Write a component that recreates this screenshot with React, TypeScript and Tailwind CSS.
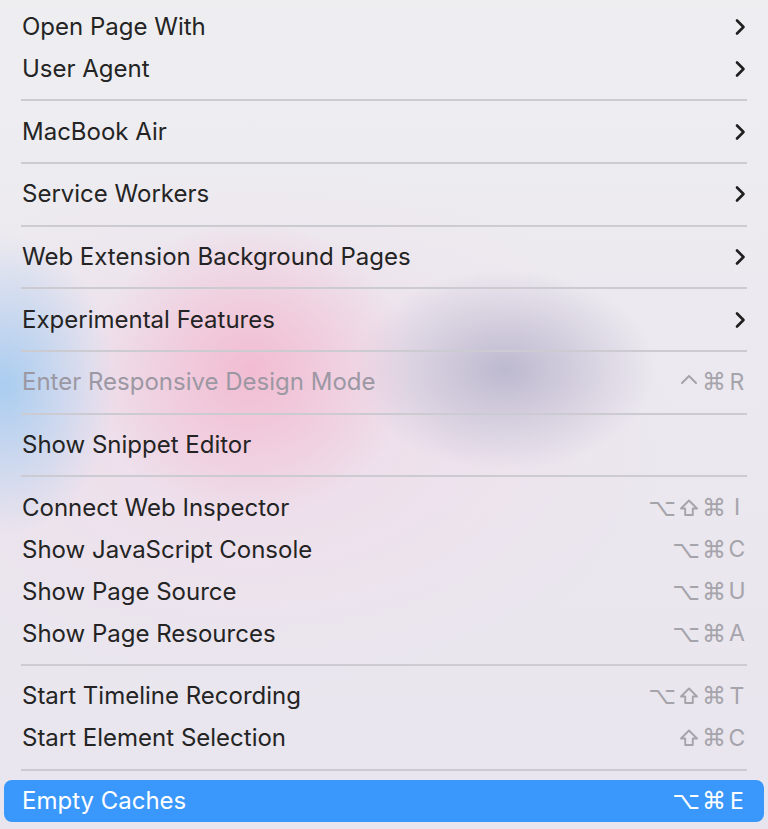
import React from 'react';

type Row =
  | { kind: 'item'; label: string; keys?: string[]; submenu?: boolean; disabled?: boolean; active?: boolean }
  | { kind: 'sep' };

const rows: Row[] = [
  { kind: 'item', label: 'Open Page With', submenu: true },
  { kind: 'item', label: 'User Agent', submenu: true },
  { kind: 'sep' },
  { kind: 'item', label: 'MacBook Air', submenu: true },
  { kind: 'sep' },
  { kind: 'item', label: 'Service Workers', submenu: true },
  { kind: 'sep' },
  { kind: 'item', label: 'Web Extension Background Pages', submenu: true },
  { kind: 'sep' },
  { kind: 'item', label: 'Experimental Features', submenu: true },
  { kind: 'sep' },
  { kind: 'item', label: 'Enter Responsive Design Mode', keys: ['ctrl', '⌘', 'R'], disabled: true },
  { kind: 'sep' },
  { kind: 'item', label: 'Show Snippet Editor' },
  { kind: 'sep' },
  { kind: 'item', label: 'Connect Web Inspector', keys: ['⌥', 'shift', '⌘', 'I'] },
  { kind: 'item', label: 'Show JavaScript Console', keys: ['⌥', '⌘', 'C'] },
  { kind: 'item', label: 'Show Page Source', keys: ['⌥', '⌘', 'U'] },
  { kind: 'item', label: 'Show Page Resources', keys: ['⌥', '⌘', 'A'] },
  { kind: 'sep' },
  { kind: 'item', label: 'Start Timeline Recording', keys: ['⌥', 'shift', '⌘', 'T'] },
  { kind: 'item', label: 'Start Element Selection', keys: ['shift', '⌘', 'C'] },
  { kind: 'sep' },
  { kind: 'item', label: 'Empty Caches', keys: ['⌥', '⌘', 'E'], active: true },
];

function Chevron() {
  return (
    <svg width="12" height="18" viewBox="0 0 12 18" fill="none" className="text-[#1f1f1f]">
      <path d="M3 2.5l6.5 6.5-6.5 6.5" stroke="currentColor" strokeWidth="2.6" strokeLinecap="round" strokeLinejoin="round" />
    </svg>
  );
}

function ShiftIcon() {
  return (
    <svg width="20" height="20" viewBox="0 0 20 20" fill="none" className="mx-[1px]">
      <path d="M10 2.5L18 10.5H13.8V17H6.2V10.5H2Z" stroke="currentColor" strokeWidth="1.9" strokeLinejoin="round" />
    </svg>
  );
}

function CaretIcon() {
  return (
    <svg width="18" height="20" viewBox="0 0 18 20" fill="none" className="mr-[2px]">
      <path d="M2 11L9 4l7 7" stroke="currentColor" strokeWidth="2" strokeLinecap="round" strokeLinejoin="round" />
    </svg>
  );
}

function Keys({ keys, active }: { keys: string[]; active?: boolean }) {
  return (
    <div className={`flex items-center gap-[2px] ${active ? 'text-white' : 'text-[#a6a4ab]'}`}>
      {keys.map((k, i) => {
        if (k === 'shift') return <ShiftIcon key={i} />;
        if (k === 'ctrl') return <CaretIcon key={i} />;
        return (
          <span
            key={i}
            className={
              /[A-Z]/.test(k)
                ? "font-['Inter',sans-serif] text-[23px] w-[18px] text-center"
                : "font-['DejaVu_Sans',sans-serif] text-[24px] leading-none"
            }
          >
            {k}
          </span>
        );
      })}
    </div>
  );
}

export default function App() {
  return (
    <div className="w-[768px] h-[829px] overflow-hidden pt-[6px] font-['Inter','Noto_Sans',sans-serif] bg-[radial-gradient(ellipse_110px_150px_at_5px_385px,#aacdf0_0%,rgba(170,205,240,0)_100%),radial-gradient(ellipse_160px_150px_at_250px_370px,#f2bcd2_0%,rgba(242,188,210,0)_100%),radial-gradient(ellipse_150px_100px_at_505px_370px,#bdb9cf_0%,rgba(189,185,207,0)_100%),radial-gradient(ellipse_420px_260px_at_250px_430px,#efdcea_0%,rgba(239,220,234,0)_100%),linear-gradient(180deg,#eeeef1_0%,#ebe8ef_50%,#e8e5ee_100%)]">
      {rows.map((row, i) => {
        if (row.kind === 'sep') {
          return (
            <div key={i} className="h-[20.67px] flex items-center px-[21px]">
              <div className="h-[2px] w-full bg-[#cdcbd2]" />
            </div>
          );
        }
        if (row.active) {
          return (
            <div
              key={i}
              className="h-[42px] mx-[4px] px-[18px] rounded-[8px] bg-[#3a98fd] flex items-center justify-between text-white text-[24px]"
            >
              <span>{row.label}</span>
              {row.keys && <Keys keys={row.keys} active />}
            </div>
          );
        }
        return (
          <div
            key={i}
            className={`h-[42px] px-[22px] flex items-center justify-between text-[24px] ${row.disabled ? 'text-[#9c98a3]' : 'text-[#242424]'}`}
          >
            <span>{row.label}</span>
            {row.submenu && <Chevron />}
            {row.keys && <Keys keys={row.keys} />}
          </div>
        );
      })}
    </div>
  );
}
